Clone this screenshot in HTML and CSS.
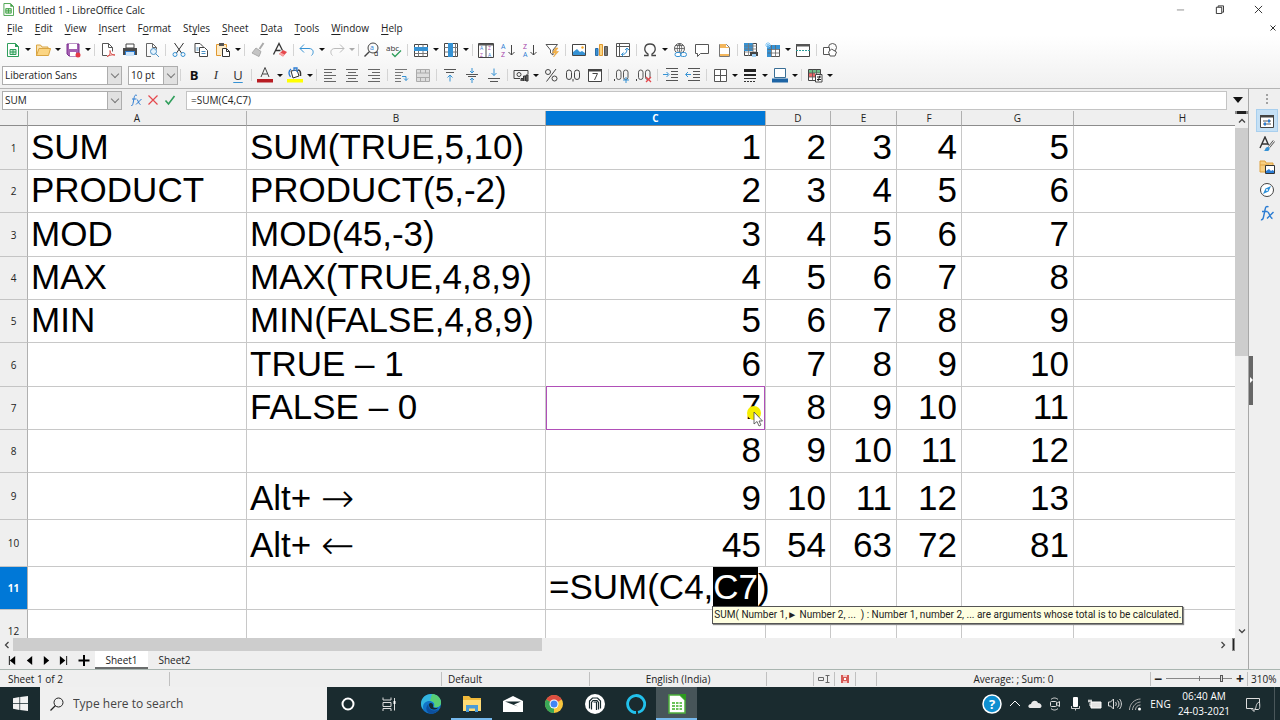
FILE: index.html
```html
<!DOCTYPE html>
<html lang="en">
<head>
    <meta charset="UTF-8">
    <title>Untitled 1 - LibreOffice Calc</title>
    <link rel="stylesheet" href="styles.css">
</head>
<body>
<header class="top">
    <div class="titlebar">
        <svg class="app_icon" viewBox="0 0 12 14"><path d="M1 .5h7l3.500 3.500v9.500h-10.500z" fill="#fff" stroke="#43a047"/><path d="M8 0v4h4z" fill="#43a047"/><path d="M3 6h6v5h-6zM3 8.500h6M6 6v5" fill="#b9e3ba" stroke="#43a047"/></svg>
        <h1>Untitled 1 - LibreOffice Calc</h1>
        <div class="win_btns">
            <button aria-label="Minimize"><svg viewBox="0 0 10 10"><path d="M1 5.500h8" stroke="#888"/></svg></button>
            <button aria-label="Restore"><svg viewBox="0 0 10 10"><path d="M1.500 2.500h6v7h-6zM3.500 2v-1h6v7h-1.500" stroke="#222"/></svg></button>
            <button aria-label="Close"><svg viewBox="0 0 10 10"><path d="M1 1l8 8M9 1l-8 8" stroke="#222"/></svg></button>
        </div>
    </div>
    <nav class="menubar">
        <button><u>F</u>ile</button>
        <button><u>E</u>dit</button>
        <button><u>V</u>iew</button>
        <button><u>I</u>nsert</button>
        <button>F<u>o</u>rmat</button>
        <button>St<u>y</u>les</button>
        <button><u>S</u>heet</button>
        <button><u>D</u>ata</button>
        <button><u>T</u>ools</button>
        <button><u>W</u>indow</button>
        <button><u>H</u>elp</button>
        <button class="doc_close" aria-label="Close document"><svg viewBox="0 0 6 6"><path d="M.5.5l5 5M5.500.5l-5 5" stroke="#333"/></svg></button>
    </nav>

    <!-- standard toolbar -->
    <div class="toolbar">
        <button class="tool" aria-label="New"><svg viewBox="0 0 16 16"><path d="M2.500 1.500h8l3 3v10h-11z" fill="#fff" stroke="#2f9e5b"/><path d="M10 1v4h4z" fill="#2f9e5b"/><path d="M5 7.500h6v5h-6zM5 10h6M8 7.500v5" fill="#c9ecd5" stroke="#2f9e5b"/></svg></button><button class="drop" aria-label="New options"></button>
        <button class="tool" aria-label="Open"><svg viewBox="0 0 16 16"><path d="M1.500 14v-11h4l1.500 2h6v3" fill="#fbe3b0" stroke="#d9a441"/><path d="M1.500 13.500l2.500-7h11.500l-2 7z" fill="#fbd583" stroke="#d9a441"/></svg></button><button class="drop" aria-label="Recent files"></button>
        <button class="tool" aria-label="Save"><svg viewBox="0 0 16 16"><path d="M2 2h12v12h-10l-2-2z" fill="#a561b3" stroke="#7b2d8e"/><path d="M4 2h8v5h-8z" fill="#fff"/><path d="M5 10h6v4h-6z" fill="#fff"/><circle cx="13" cy="13" r="2.500" fill="#e53946"/></svg></button><button class="drop" aria-label="Save options"></button>
        <i class="sep"></i>
        <button class="tool" aria-label="Export as PDF"><svg viewBox="0 0 16 16"><path d="M7 13.500h-4.500v-12h6l4 4v4" fill="#fff" stroke="#555"/><path d="M8.500 1.500v4h4" stroke="#555"/><path d="M7 14.500c3-1 3.500-4 3-6c0 3 2 4.500 5 4.500c-3-.5-5 0-8 1.500z" stroke="#d9534f"/></svg></button>
        <button class="tool" aria-label="Print"><svg viewBox="0 0 16 16"><path d="M4 2h8v4h-8z" fill="#fff" stroke="#444"/><path d="M1 6h14v7h-14z" fill="#4a4a4a"/><path d="M3 9h10v4h-10z" fill="#2b7cd3"/><path d="M4 10h8v4h-8z" fill="#cfe6fa"/></svg></button>
        <button class="tool" aria-label="Print preview"><svg viewBox="0 0 16 16"><path d="M7 14.500h-4.500v-13h6l4 4v2M8.500 1.500v4h4" stroke="#666"/><circle cx="9.500" cy="9.500" r="3" fill="#e3f2fd" stroke="#4a90c4"/><path d="M11.500 11.500l3.500 3.500" stroke="#4a90c4"/></svg></button>
        <i class="sep"></i>
        <button class="tool" aria-label="Cut"><svg viewBox="0 0 16 16"><path d="M3.500 1l7 10M12.500 1l-7 10" stroke="#333"/><circle cx="4" cy="12.500" r="2" stroke="#3692d4"/><circle cx="12" cy="12.500" r="2" stroke="#3692d4"/></svg></button>
        <button class="tool" aria-label="Copy"><svg viewBox="0 0 16 16"><path d="M2 1.500h5l3 3v6h-8z" fill="#fff" stroke="#444"/><path d="M6.500 5.500h5l3 3v6h-8z" fill="#fff" stroke="#444"/><path d="M8.500 9.500h4M8.500 11.500h4M3.500 6h2M3.500 8h2" stroke="#4a90c4"/></svg></button>
        <button class="tool" aria-label="Paste"><svg viewBox="0 0 16 16"><path d="M6 13.500h-4.500v-11h10v3" fill="#fdebc8" stroke="#e0982f"/><path d="M4 1h5v3h-5z" fill="#555"/><path d="M7.500 6.500h4l3 3v5h-7z" fill="#fff" stroke="#333"/><path d="M11.500 6.500v3h3" stroke="#333"/></svg></button><button class="drop" aria-label="Paste options"></button>
        <i class="sep"></i>
        <button class="tool" aria-label="Clone formatting" disabled><svg viewBox="0 0 16 16"><path d="M13.500 1l-4 6" stroke="#aaa" stroke-width="2"/><path d="M6 6l5 3.500-2 5-7-3.500z" fill="#c4c4c4" stroke="#aaa"/></svg></button>
        <button class="tool" aria-label="Clear formatting"><svg viewBox="0 0 16 16"><path d="M1.500 12.500l5.500-11 3.500 7M3.500 8.500h5" stroke="#333" stroke-width="1.300"/><path d="M7 12l4-4 4 2-4 4.500z" fill="#e5484d"/><path d="M7 12l1.500-1.500 4 2-1.500 2z" fill="#f8a5a5"/></svg></button>
        <i class="sep"></i>
        <button class="tool" aria-label="Undo"><svg viewBox="0 0 16 16"><path d="M5 2.500l-4 4 4 4M1 6.500h9c5 0 5 5 2.500 7" stroke="#3692d4"/></svg></button><button class="drop" aria-label="Undo list"></button>
        <button class="tool" aria-label="Redo" disabled><svg viewBox="0 0 16 16"><path d="M11 2.500l4 4-4 4M15 6.500h-9c-5 0-5 5-2.500 7" stroke="#bbb"/></svg></button><button class="drop dim" aria-label="Redo list"></button>
        <i class="sep"></i>
        <button class="tool" aria-label="Find and replace"><svg viewBox="0 0 16 16"><circle cx="9" cy="6" r="5" stroke="#444"/><path d="M5.500 9.500l-5 5" stroke="#444" stroke-width="1.500"/><text x="6" y="8" font-size="7" fill="#2b7cd3">a</text><text x="10" y="14" font-size="7" fill="#222">d</text></svg></button>
        <button class="tool" aria-label="Spelling"><svg viewBox="0 0 16 16"><text x="0" y="9" font-size="8" fill="#333">abc</text><path d="M6 11.500l3 3 6-6" stroke="#2f9e5b" stroke-width="1.300"/></svg></button>
        <i class="sep"></i>
        <button class="tool" aria-label="Row"><svg viewBox="0 0 16 16"><path d="M1.500 2.500h13v12h-13z" fill="#fff" stroke="#444"/><path d="M1 5h14v4h-14z" fill="#3692d4"/><path d="M1.500 11.500h13M5.500 9v5.500M10 9v5.500M5.500 2.500v2.500M10 2.500v2.500" stroke="#777"/></svg></button><button class="drop" aria-label="Row options"></button>
        <button class="tool" aria-label="Column"><svg viewBox="0 0 16 16"><path d="M1.500 1.500h13v13h-13z" fill="#fff" stroke="#444"/><path d="M5 1h5v14h-5z" fill="#3692d4"/><path d="M1.500 5.500h3.500M1.500 10h3.500M10 5.500h4.500M10 10h4.500M12.500 1.500v13" stroke="#777"/></svg></button><button class="drop" aria-label="Column options"></button>
        <i class="sep"></i>
        <button class="tool" aria-label="Sort"><svg viewBox="0 0 16 16"><path d="M.5 1.500h15v14h-15zM8 3v12" fill="#fff" stroke="#444"/><path d="M1 2h14v1.500h-14z" fill="#555"/><text x="2" y="8" font-size="5" fill="#2b7cd3">A</text><text x="2" y="15" font-size="5" fill="#a33fa8">Z</text><text x="10" y="8" font-size="5" fill="#a33fa8">Z</text><text x="10" y="15" font-size="5" fill="#2b7cd3">A</text></svg></button>
        <button class="tool" aria-label="Sort ascending"><svg viewBox="0 0 16 16"><text x="1" y="7" font-size="7" fill="#2b7cd3">A</text><text x="1" y="15" font-size="7" fill="#a33fa8">Z</text><path d="M11.500 3v10M8.500 10l3 3 3-3" stroke="#444"/></svg></button>
        <button class="tool" aria-label="Sort descending"><svg viewBox="0 0 16 16"><text x="1" y="7" font-size="7" fill="#a33fa8">Z</text><text x="1" y="15" font-size="7" fill="#2b7cd3">A</text><path d="M11.500 3v10M8.500 10l3 3 3-3" stroke="#444"/></svg></button>
        <button class="tool" aria-label="AutoFilter"><svg viewBox="0 0 16 16"><path d="M2 2.500h11.500l-4.500 5.500v5l-2.500-2v-3z" fill="#fff" stroke="#555"/><path d="M11.500 6l-3 5h3l-2 4 5-5.500h-3l2.500-3.500z" fill="#f7b54a" stroke="#e0982f" stroke-width=".5"/></svg></button>
        <i class="sep"></i>
        <button class="tool" aria-label="Insert image"><svg viewBox="0 0 16 16"><path d="M1.500 2.500h13v11h-13z" fill="#fff" stroke="#444"/><path d="M2 13v-3l4-3 3 3 2-1 3 2v2z" fill="#3692d4"/><circle cx="11.500" cy="5.500" r="1.200" fill="#f5a623"/></svg></button>
        <button class="tool" aria-label="Insert chart"><svg viewBox="0 0 16 16"><path d="M2.500 6.500h2.500v7h-2.500z" fill="#3692d4" stroke="#2b6ca8"/><path d="M6.500 2.500h3v11h-3z" fill="#fbd583" stroke="#e0982f"/><path d="M11.500 4.500h3v9h-3z" fill="#777" stroke="#555"/></svg></button>
        <button class="tool" aria-label="Insert pivot table"><svg viewBox="0 0 16 16"><path d="M1.500 1.500h13v13h-13zM1.500 4.500h13M4.500 1.500v13" fill="#fff" stroke="#555"/><path d="M6.500 12.500c4 0 5.500-2 5.500-6M10 8l2-2 2 2M8.500 10.500l-2 2 2 2" stroke="#3692d4"/></svg></button>
        <i class="sep"></i>
        <button class="tool" aria-label="Special character"><svg viewBox="0 0 16 16"><path d="M2 13.500h4v-1.500c-5-3-4-10 2-10s7 7 2 10v1.500h4" stroke="#444" stroke-width="1.300"/></svg></button><button class="drop" aria-label="More characters"></button>
        <button class="tool" aria-label="Insert hyperlink"><svg viewBox="0 0 16 16"><circle cx="7.500" cy="6.500" r="5" stroke="#555"/><path d="M2.500 6.500h10M7.500 1.500v10M4 3.500h7M7.500 1.500c-3 3-3 7 0 10M7.500 1.500c3 3 3 7 0 10" stroke="#555" stroke-width=".8"/><rect x="3" y="10.500" width="6" height="4" rx="2" fill="#fff" stroke="#3692d4"/><rect x="8.500" y="10.500" width="6" height="4" rx="2" stroke="#3692d4"/></svg></button>
        <button class="tool" aria-label="Insert comment"><svg viewBox="0 0 16 16"><path d="M1.500 2.500h13v9h-8l-3 3v-3h-2z" fill="#fff" stroke="#555"/></svg></button>
        <button class="tool" aria-label="Headers and footers"><svg viewBox="0 0 16 16"><path d="M3.500 2.500h7l3 3v9h-10z" fill="#fff" stroke="#777"/><path d="M4 2h6v3h3v1h-9zM4 12h9v2h-9z" fill="#f3b65c"/></svg></button>
        <i class="sep"></i>
        <button class="tool" aria-label="Define print area"><svg viewBox="0 0 16 16"><path d="M1.500 1.500h12v12h-12z" fill="#fff" stroke="#444"/><path d="M1 1h9v8h-9z" fill="#3692d4"/><path d="M1 4h13M1 7h13M1 10h13M5.500 1v13M10 1v13" stroke="#777" stroke-width=".8"/><path d="M7 10h8v4h-8z" fill="#444"/><path d="M9 12h4v3h-4z" fill="#9fd0f5"/></svg></button>
        <button class="tool" aria-label="Freeze rows and columns"><svg viewBox="0 0 16 16"><path d="M2.500 3.500h12v11h-12z" fill="#fff" stroke="#555"/><path d="M2 3h13v4h-13zM2 3h4v12h-4z" fill="#3692d4"/><path d="M2.500 7.500h12M2.500 11h12M6.500 3v12M10.500 3v12" stroke="#666" stroke-width=".8"/><path d="M3 0v6M0 3h6M1 1l4 4M5 1l-4 4" stroke="#8ccaf5"/></svg></button><button class="drop" aria-label="Freeze options"></button>
        <button class="tool" aria-label="Split window"><svg viewBox="0 0 16 16"><path d="M1.500 2.500h13v12h-13z" fill="#fff" stroke="#444"/><path d="M1 2h14v2.500h-14z" fill="#555"/><path d="M1 8.500h14" stroke="#2f9e9b" stroke-dasharray="2 1"/></svg></button>
        <i class="sep"></i>
        <button class="tool" aria-label="Show draw functions"><svg viewBox="0 0 16 16"><circle cx="10.500" cy="5.500" r="4" stroke="#555"/><path d="M1.500 5.500h6v7h-6z" fill="#fff" stroke="#555"/><path d="M9.500 7l5 3-1.500 4h-5l-1.500-4z" fill="#fff" stroke="#555"/></svg></button>
    </div>

    <!-- formatting toolbar -->
    <div class="toolbar">
        <div class="combo font_name"><select aria-label="Font name"><option>Liberation Sans</option></select><span class="combo_arrow"></span></div>
        <div class="combo font_size"><select aria-label="Font size"><option>10 pt</option></select><span class="combo_arrow"></span></div>
        <i class="sep"></i>
        <button class="tool letter bold">B</button>
        <button class="tool letter italic">I</button>
        <button class="tool letter underline">U</button>
        <i class="sep"></i>
        <button class="tool" aria-label="Font color"><svg viewBox="0 0 16 16"><path d="M4 10l4-9.500 4 9.500M5.500 7h5" stroke="#444"/><path d="M0 12h16v3.500h-16z" fill="#b81c22"/></svg></button><button class="drop" aria-label="Font colors"></button>
        <button class="tool" aria-label="Highlighting color"><svg viewBox="0 0 16 16"><path d="M4 4l6-1 2 6-6 2z" fill="#fff" stroke="#333"/><path d="M3.500 10c-2-3-2-6 .5-8M7 4v-3h3v4" stroke="#2b7cd3" stroke-width="1.300"/><path d="M11 3c2 0 3 2 2.500 6" stroke="#333" stroke-width="1.500"/><path d="M0 12h16v3.500h-16z" fill="#ffff00"/></svg></button><button class="drop" aria-label="Highlighting colors"></button>
        <i class="sep"></i>
        <button class="tool" aria-label="Align left"><svg viewBox="0 0 16 16"><path d="M2 2.500h12M2 5.500h8M2 8.500h12M2 11.500h8M2 14.500h12" stroke="#666"/></svg></button>
        <button class="tool" aria-label="Center horizontally"><svg viewBox="0 0 16 16"><path d="M2 2.500h12M4 5.500h8M2 8.500h12M4 11.500h8M2 14.500h12" stroke="#666"/></svg></button>
        <button class="tool" aria-label="Align right"><svg viewBox="0 0 16 16"><path d="M2 2.500h12M6 5.500h8M2 8.500h12M6 11.500h8M2 14.500h12" stroke="#666"/></svg></button>
        <i class="sep"></i>
        <button class="tool" aria-label="Wrap text"><svg viewBox="0 0 16 16"><path d="M2 2.500h12M2 5.500h8M2 8.500h6M2 11.500h6M2 14.500h6" stroke="#777"/><path d="M9 9.500h4v4M11 11.500l2 2 2-2" stroke="#3692d4"/></svg></button>
        <button class="tool" aria-label="Merge cells" disabled><svg viewBox="0 0 16 16"><path d="M1.500 2.500h13v12h-13zM1.500 6h13M1.500 10.500h13M5.500 2.500v3.500M10.500 2.500v3.500M5.500 10.500v4M10.500 10.500v4" fill="#ddd" stroke="#aaa"/></svg></button>
        <i class="sep"></i>
        <button class="tool" aria-label="Align top"><svg viewBox="0 0 16 16"><path d="M2 2.500h12M4 5.500h8" stroke="#555"/><path d="M8 14.500v-6M5.500 10.500l2.500-2.500 2.500 2.500" stroke="#3692d4"/></svg></button>
        <button class="tool" aria-label="Center vertically"><svg viewBox="0 0 16 16"><path d="M2 7.500h12M4 9.500h8" stroke="#555"/><path d="M8 1v5M6 4l2 2 2-2M8 16v-5M6 13l2-2 2 2" stroke="#3692d4"/></svg></button>
        <button class="tool" aria-label="Align bottom"><svg viewBox="0 0 16 16"><path d="M2 11.500h12M4 14.500h8" stroke="#555"/><path d="M8 1.500v7M5.500 6l2.500 2.500 2.500-2.500" stroke="#3692d4"/></svg></button>
        <i class="sep"></i>
        <button class="tool" aria-label="Format as currency"><svg viewBox="0 0 16 16"><path d="M7 11.500h-6v-8h14v4" stroke="#444"/><circle cx="6" cy="7.500" r="2" stroke="#444"/><path d="M8 14v-2.500h2v2.500M10.500 14v-5h2v5M13 14v-6h2v6z" fill="#777" stroke="#333"/></svg></button><button class="drop" aria-label="Currency options"></button>
        <button class="tool" aria-label="Format as percent"><svg viewBox="0 0 16 16"><circle cx="5" cy="5" r="2.500" stroke="#444"/><circle cx="11.500" cy="11.500" r="2.500" stroke="#444"/><path d="M13 2l-9.500 12.500" stroke="#444"/></svg></button>
        <button class="tool" aria-label="Format as number"><svg viewBox="0 0 16 16"><rect x="1.500" y="3" width="5" height="9.500" rx="2.500" stroke="#444"/><rect x="9.500" y="3" width="5" height="9.500" rx="2.500" stroke="#444"/><path d="M8 12v2.500" stroke="#444"/></svg></button>
        <button class="tool" aria-label="Format as date"><svg viewBox="0 0 16 16"><path d="M1.500 2.500h13v12h-13z" fill="#fff" stroke="#444"/><path d="M1 2h14v2.500h-14z" fill="#444"/><path d="M5.500 6.500h5l-3 6.500" stroke="#444"/></svg></button>
        <i class="sep"></i>
        <button class="tool" aria-label="Add decimal place"><svg viewBox="0 0 16 16"><path d="M.5 12v2" stroke="#444"/><rect x="2.500" y="3" width="4.500" height="9.500" rx="2.200" stroke="#555"/><rect x="9.500" y="3" width="4.500" height="9.500" rx="2.200" stroke="#555"/><path d="M9 13h6M12 10v6" stroke="#3692d4"/></svg></button>
        <button class="tool" aria-label="Delete decimal place"><svg viewBox="0 0 16 16"><path d="M.5 12v2" stroke="#444"/><rect x="2.500" y="3" width="4.500" height="9.500" rx="2.200" stroke="#555"/><rect x="9.500" y="3" width="4.500" height="9.500" rx="2.200" stroke="#555"/><path d="M10 10l5 5M15 10l-5 5" stroke="#e5484d" stroke-width="1.300"/></svg></button>
        <i class="sep"></i>
        <button class="tool" aria-label="Increase indent"><svg viewBox="0 0 16 16"><path d="M3 1.500h12M8 4.500h7M8 7.500h7M8 10.500h7M3 13.500h12" stroke="#555"/><path d="M0 7.500h5M3.500 5l2.500 2.500-2.500 2.500" stroke="#3692d4"/></svg></button>
        <button class="tool" aria-label="Decrease indent"><svg viewBox="0 0 16 16"><path d="M3 1.500h12M8 4.500h7M8 7.500h7M8 10.500h7M3 13.500h12" stroke="#555"/><path d="M1 7.500h5M3 5l-2.500 2.500 2.500 2.500" stroke="#3692d4"/></svg></button>
        <i class="sep"></i>
        <button class="tool" aria-label="Borders"><svg viewBox="0 0 16 16"><path d="M2.500 2.500h12v12h-12zM8.500 2.500v12M2.500 8.500h12" fill="#fff" stroke="#555"/></svg></button><button class="drop" aria-label="Border options"></button>
        <button class="tool" aria-label="Border style"><svg viewBox="0 0 16 16"><path d="M2 3.500h12" stroke="#222" stroke-width="3"/><path d="M2 8h12" stroke="#222" stroke-width="2"/><path d="M2 11.500h12" stroke="#333"/><path d="M2 14.500h12" stroke="#333" stroke-dasharray="2 1"/></svg></button><button class="drop" aria-label="Border styles"></button>
        <button class="tool" aria-label="Border color"><svg viewBox="0 0 16 16"><path d="M2.500 1.500h11v9h-11z" fill="#fff" stroke="#3a6f96"/><path d="M0 11.500h16v4h-16z" fill="#1d64a5"/></svg></button><button class="drop" aria-label="Border colors"></button>
        <i class="sep"></i>
        <button class="tool" aria-label="Conditional formatting"><svg viewBox="0 0 16 16"><path d="M1.500 2.500h12v11h-12z" fill="#fff" stroke="#444"/><path d="M2 3h11v3h-11z" fill="#6fbf8a"/><path d="M2 6h6v4h-6z" fill="#ee6a6a"/><path d="M1.500 6h12M1.500 10h12M5.500 2.500v11M9.500 2.500v11" stroke="#555" stroke-width=".8"/><path d="M8.500 7.500h6.500v7.500h-6.500z" fill="#fff" stroke="#444"/><path d="M10 10h4M10 12.500h4M13 8.500l-2 5.500" stroke="#222"/></svg></button><button class="drop" aria-label="Conditional options"></button>
    </div>
</header>

<main class="workspace">
    <section class="document">
        <div class="formula_bar">
            <div class="combo name_box"><input type="text" aria-label="Name box" value="SUM"><button class="combo_arrow" aria-label="Names"></button></div>
            <div class="formula_btns">
                <button aria-label="Function wizard"><svg viewBox="0 0 12 12"><path d="M7 1.500c-2-1-2.500 0-3 3l-1 5c-.5 2-1 2.500-2 2M2 5h4M6.500 5c1.500 0 2 5.500 4 5.500M11.500 5l-5.500 5.500" stroke="#2b7cd3"/></svg></button>
                <button aria-label="Cancel"><svg viewBox="0 0 12 12"><path d="M1.500 1.500l9 9M10.500 1.500l-9 9" stroke="#e5484d" stroke-width="1.200"/></svg></button>
                <button aria-label="Accept"><svg viewBox="0 0 12 12"><path d="M1.500 6.500l3 3.500 6-8" stroke="#2f9e5b" stroke-width="1.600"/></svg></button>
            </div>
            <input class="formula" type="text" aria-label="Formula" value="=SUM(C4,C7)">
            <button class="expand" aria-label="Expand formula bar"></button>
        </div>

        <div class="sheet_area">
            <div class="grid_view">
                <table class="grid">
                    <colgroup><col class="c_num"><col class="c_a"><col class="c_b"><col class="c_c"><col class="c_d"><col class="c_e"><col class="c_f"><col class="c_g"><col></colgroup>
                    <thead>
                        <tr><th></th><th>A</th><th>B</th><th class="current">C</th><th>D</th><th>E</th><th>F</th><th>G</th><th class="col_h">H</th></tr>
                    </thead>
                    <tbody>
                        <tr class="tall"><th>1</th><td>SUM</td><td>SUM(TRUE,5,10)</td><td class="num">1</td><td class="num">2</td><td class="num">3</td><td class="num">4</td><td class="num">5</td><td></td></tr>
                        <tr><th>2</th><td>PRODUCT</td><td>PRODUCT(5,-2)</td><td class="num">2</td><td class="num">3</td><td class="num">4</td><td class="num">5</td><td class="num">6</td><td></td></tr>
                        <tr class="tall"><th>3</th><td>MOD</td><td>MOD(45,-3)</td><td class="num">3</td><td class="num">4</td><td class="num">5</td><td class="num">6</td><td class="num">7</td><td></td></tr>
                        <tr><th>4</th><td>MAX</td><td>MAX(TRUE,4,8,9)</td><td class="num">4</td><td class="num">5</td><td class="num">6</td><td class="num">7</td><td class="num">8</td><td></td></tr>
                        <tr><th>5</th><td>MIN</td><td>MIN(FALSE,4,8,9)</td><td class="num">5</td><td class="num">6</td><td class="num">7</td><td class="num">8</td><td class="num">9</td><td></td></tr>
                        <tr class="tall"><th>6</th><td></td><td>TRUE – 1</td><td class="num">6</td><td class="num">7</td><td class="num">8</td><td class="num">9</td><td class="num">10</td><td></td></tr>
                        <tr><th>7</th><td></td><td>FALSE – 0</td><td class="num picked">7<span class="pointer"><svg viewBox="0 0 18 22"><circle cx="8" cy="8" r="7" fill="#f5ee00"/><path d="M8 7v12l3-2.500 2 4.500 2-1-2-4h3.500z" fill="#fff" stroke="#444" stroke-width=".8"/></svg></span></td><td class="num">8</td><td class="num">9</td><td class="num">10</td><td class="num">11</td><td></td></tr>
                        <tr><th>8</th><td></td><td></td><td class="num">8</td><td class="num">9</td><td class="num">10</td><td class="num">11</td><td class="num">12</td><td></td></tr>
                        <tr class="arrows"><th>9</th><td></td><td>Alt+ <span class="sym">→</span></td><td class="num">9</td><td class="num">10</td><td class="num">11</td><td class="num">12</td><td class="num">13</td><td></td></tr>
                        <tr class="arrows"><th>10</th><td></td><td>Alt+ <span class="sym">←</span></td><td class="num">45</td><td class="num">54</td><td class="num">63</td><td class="num">72</td><td class="num">81</td><td></td></tr>
                        <tr><th class="current">11</th><td></td><td></td><td class="editing"><div class="editor">=SUM(C4,<span class="sel">C7<span class="hint">SUM( Number 1,<b>►</b> Number 2, ...&nbsp; ) : Number 1, number 2, ... are arguments whose total is to be calculated.</span></span>)</div></td><td></td><td></td><td></td><td></td><td></td></tr>
                        <tr><th>12</th><td></td><td></td><td></td><td></td><td></td><td></td><td></td><td></td></tr>
                    </tbody>
                </table>
            </div>
            <div class="vscroll">
                <i class="split"></i>
                <button aria-label="Scroll up"><svg viewBox="0 0 8 8"><path d="M1 5.500l3-3 3 3" stroke="#444" stroke-width="1.300"/></svg></button>
                <div class="track"><i class="thumb"></i></div>
                <button aria-label="Scroll down"><svg viewBox="0 0 8 8"><path d="M1 2.500l3 3 3-3" stroke="#444" stroke-width="1.300"/></svg></button>
            </div>
        </div>

        <div class="hscroll">
            <button aria-label="Scroll left"><svg viewBox="0 0 8 8"><path d="M5.500 1l-3 3 3 3" stroke="#444" stroke-width="1.300"/></svg></button>
            <div class="track"><i class="thumb"></i></div>
            <button aria-label="Scroll right"><svg viewBox="0 0 8 8"><path d="M2.500 1l3 3-3 3" stroke="#444" stroke-width="1.300"/></svg></button>
            <i class="split"></i>
        </div>

        <div class="tabs">
            <button class="nav" aria-label="First sheet"><svg viewBox="0 0 10 10"><path d="M1.500 0v10" stroke="#000"/><path d="M8 0v10l-6-5z" fill="#000"/></svg></button>
            <button class="nav" aria-label="Previous sheet"><svg viewBox="0 0 10 10"><path d="M8 0v10l-6-5z" fill="#000"/></svg></button>
            <button class="nav" aria-label="Next sheet"><svg viewBox="0 0 10 10"><path d="M2 0v10l6-5z" fill="#000"/></svg></button>
            <button class="nav" aria-label="Last sheet"><svg viewBox="0 0 10 10"><path d="M1 0v10l6-5z" fill="#000"/><path d="M8.500 0v10" stroke="#000"/></svg></button>
            <button class="nav add" aria-label="Add sheet"><svg viewBox="0 0 12 12"><path d="M6 1v11M.5 6.500h11" stroke="#000" stroke-width="2"/></svg></button>
            <button class="tab on">Sheet1</button>
            <button class="tab">Sheet2</button>
        </div>
    </section>

    <aside class="sidebar">
        <button class="handle" aria-label="Hide sidebar"></button>
        <button class="deck" aria-label="Sidebar settings"><svg viewBox="0 0 16 16"><path d="M8 3v2M8 7v2M8 11v2" stroke="#555"/></svg></button>
        <button class="deck on" aria-label="Properties"><svg viewBox="0 0 16 16"><path d="M1.500 2.500h13v12h-13z" fill="#fff" stroke="#444"/><path d="M1 2h14v2.500h-14z" fill="#444"/><path d="M4 8h8M4 11h8" stroke="#555"/><path d="M10 6.500v3M6 9.500v3" stroke="#2b7cd3" stroke-width="2"/></svg></button>
        <button class="deck" aria-label="Styles"><svg viewBox="0 0 16 16"><path d="M1 12l5-11 3.500 8M3 8h5.500" stroke="#333" stroke-width="1.400"/><path d="M15 5l-5 6" stroke="#555" stroke-width="2.500"/><path d="M15 5l-5 6" stroke="#fff"/><path d="M4.500 15c2 0 1.500-4 4-4s3 2.500.5 4z" fill="#3692d4"/></svg></button>
        <button class="deck" aria-label="Gallery"><svg viewBox="0 0 16 16"><path d="M1 13v-11h5l1 2h7v9z" fill="#f7cf82" stroke="#dfa03c"/><path d="M1 6h9" stroke="#dfa03c"/><path d="M6.500 6.500h9v8h-9z" fill="#fff" stroke="#333"/><path d="M7 14v-2l3-2 2 2 1.500-1 1.500 1v2z" fill="#2b7cd3"/></svg></button>
        <button class="deck" aria-label="Navigator"><svg viewBox="0 0 16 16"><circle cx="8" cy="8" r="6.500" fill="#fff" stroke="#444"/><path d="M12 4l-2.500 5.500-5.500 2.500 2.500-5.500z" fill="#2b8fd8"/><circle cx="8" cy="8" r="1" fill="#fff"/></svg></button>
        <button class="deck" aria-label="Functions"><svg viewBox="0 0 16 16"><path d="M9.500 2c-2-1.500-3 0-3.500 3l-1.500 7c-.5 2.500-1.500 3-2.500 2.500M3 6.500h5.500M8.500 7c2 0 2.500 6.500 5 6.500M14.500 7l-6.500 6.500" stroke="#2b7cd3" stroke-width="1.400"/></svg></button>
    </aside>
</main>

<footer class="status">
    <span class="s_sheet">Sheet 1 of 2</span>
    <span class="s_find"></span>
    <span class="s_style">Default</span>
    <span class="s_lang">English (India)</span>
    <span class="s_gap"></span>
    <span class="s_icon"><svg viewBox="0 0 12 8"><path d="M.5 2.500h5v3h-5zM7.500.5h4M7.500 7.500h4M9.500.5v7" stroke="#666"/></svg></span>
    <span class="s_icon"><svg viewBox="0 0 12 8"><path d="M2 0h8v8h-8z" fill="#d65a56"/><path d="M4 0h4v2h-4zM4 6h4v2h-4z" fill="#f3c2c0"/><path d="M5 3l2 2M7 3l-2 2" stroke="#fff"/></svg></span>
    <span class="s_icon"></span>
    <span class="s_sum">Average: ; Sum: 0</span>
    <span class="s_zoom">
        <button aria-label="Zoom out">−</button>
        <input type="range" min="0" max="100" value="85" aria-label="Zoom">
        <button aria-label="Zoom in">+</button>
    </span>
    <span class="s_pct">310%</span>
</footer>

<footer class="taskbar">
    <button class="start" aria-label="Start"><svg viewBox="0 0 14 14"><path d="M0 2l6-1v5.700h-6zM6.700.9l7.300-.9v6.700h-7.300zM0 7.400h6v5.600l-6-1zM6.700 7.400h7.300v6.600l-7.300-.9z" fill="#f2f2f2"/></svg></button>
    <label class="search">
        <svg viewBox="0 0 14 14"><circle cx="8.500" cy="5.500" r="4.500" stroke="#222"/><path d="M5.500 8.500l-5 5" stroke="#222" stroke-width="1.200"/></svg>
        <input type="text" placeholder="Type here to search">
    </label>
    <div class="apps">
        <button aria-label="Cortana"><svg viewBox="0 0 20 20"><circle cx="10" cy="10" r="5.500" stroke="#fff" stroke-width="2"/></svg></button>
        <button aria-label="Task view"><svg viewBox="0 0 20 20"><path d="M4 3.500v2.500h8v-2.500M4 17v-2.500h8v2.500M4 8.500h8v4h-8zM15.500 4v12.500" stroke="#ddd"/><path d="M15.500 7v3" stroke="#fff" stroke-width="2"/></svg></button>
        <button class="first" aria-label="Microsoft Edge"><svg viewBox="0 0 20 20"><circle cx="10" cy="10" r="10" fill="#1173c7"/><path d="M0 9.500c.5-12 19-13 20-1 0 4-3.500 5.500-7 4.500 2-4-3-7-7-5.500-3 1-5 4-3.500 8-1.800-1.500-2.500-4-2.500-6z" fill="#32b5e0"/><path d="M11 0c6 .5 9 4.500 9 8.500 0 4-3.500 5.500-7 4.500 1.500-4-1-6-4-6z" fill="#58cf75"/><path d="M7.500 10c-1 5 4 8 10 5.500-2 3.500-5.500 4.500-8 4.500-4-1.500-6-6-2-10z" fill="#0c4f9e"/><path d="M8 10c1.500-2.500 5 0 4 2.500-.5 1.500 3 2 5 1-1 2-3 2-4.500 2-3 0-5-3-4.500-5.500z" fill="#172a2e"/></svg></button>
        <button class="open" aria-label="File Explorer"><svg viewBox="0 0 20 20"><path d="M1 2h6l2 2h10v13h-18z" fill="#f0b93a"/><path d="M1 6h18v11h-18z" fill="#ffdb76"/><path d="M4 18v-7h12v7h-3v-3.500h-6v3.500z" fill="#4a9bd8"/></svg></button>
        <button aria-label="Mail"><svg viewBox="0 0 20 20"><path d="M0 7l10-5 10 5v11h-20z" fill="#fff"/><path d="M2 7.500h16l-7 3 4 2z" fill="#172a2e"/></svg></button>
        <button aria-label="Chrome"><svg viewBox="0 0 20 20"><circle cx="10" cy="10" r="9" fill="#f8c63d"/><path d="M10 10l-7.800-4.500a9 9 0 0 1 15.600 0z" fill="#dc4e41"/><path d="M10 10v9a9 9 0 0 1-7.800-13.500z" fill="#3aa757"/><circle cx="10" cy="10" r="4.500" fill="#fff"/><circle cx="10" cy="10" r="3.500" fill="#4285f4"/></svg></button>
        <button aria-label="Launcher"><svg viewBox="0 0 20 20"><circle cx="10" cy="10" r="10" fill="#fff"/><path d="M4.500 14.500v-7.500l3-3h5l3 3v7.500M6.500 15.500v-7l1.500-2h4l1.500 2v7M8.500 8h3v8" stroke="#172a2e" stroke-width="1.200"/></svg></button>
        <button aria-label="Alexa"><svg viewBox="0 0 20 20"><path d="M10 18.500a8.500 8.500 0 1 1 2-.2" stroke="#22c1ec" stroke-width="2.800"/></svg></button>
        <button class="open on" aria-label="LibreOffice Calc"><svg viewBox="0 0 20 20"><path d="M2 1h11l5 5v13h-16z" fill="#fff" stroke="#4caf3b" stroke-width="1.500"/><path d="M12 0h7v7z" fill="#2d9a1f"/><path d="M5 8h10v8h-10z" fill="#6cc35c"/><path d="M5 10.500h10M5 13.500h10M8.500 8v8M12 8v8" stroke="#fff"/></svg></button>
    </div>
    <div class="tray">
        <button aria-label="Help" class="help"><svg viewBox="0 0 20 20"><circle cx="10" cy="10" r="9" fill="#0f8fd0" stroke="#fff" stroke-width="1.500"/><text x="7" y="15" font-size="13" font-weight="700" fill="#fff">?</text></svg></button>
        <button aria-label="Show hidden icons"><svg viewBox="0 0 14 14"><path d="M2 9l5-5 5 5" stroke="#fff"/></svg></button>
        <button aria-label="OneDrive"><svg viewBox="0 0 14 14"><path d="M3 11c-4 0-3-4 0-4 1-4 6-4 7-1 4 0 5 5 1 5z" fill="#e8e8e8"/></svg></button>
        <button aria-label="Meet now"><svg viewBox="0 0 14 14"><rect x="2.500" y="4.500" width="6" height="5" rx="1" stroke="#ddd"/><path d="M8.500 6.500l3-2v5l-3-2M3 2.500c2-2 5-2 7 0M3 11.500c2 2 5 2 7 0" stroke="#ddd"/></svg></button>
        <button aria-label="Microphone"><svg viewBox="0 0 14 14"><rect x="5" y="0" width="5" height="10" rx="1" fill="#fff"/><path d="M3.500 9v2.500h8v-2.500M7.500 11.500v2" stroke="#ccc"/></svg></button>
        <button aria-label="Battery"><svg viewBox="0 0 14 14"><path d="M3 5h10v6h-10z" fill="#e4e4e4" stroke="#fff"/><path d="M0 4h4M1 2.500v3M3 2.500v3M2 6v3h2" stroke="#fff"/></svg></button>
        <button aria-label="Volume"><svg viewBox="0 0 14 14"><path d="M.5 5h2l3-3v10l-3-3h-2zM7.500 5c1 1 1 3 0 4M9.500 3.500c2 2 2 5 0 7M11.500 2c2.500 3 2.500 7 0 10" stroke="#ddd"/></svg></button>
        <button aria-label="Network"><svg viewBox="0 0 14 14"><path d="M1.500 13c0-6 5-11 11-11M4.500 13c0-4 4-8 8-8M7.500 13c0-3 2-5 5-5" stroke="#aaa"/><circle cx="11.500" cy="12" r="1.500" fill="#fff"/></svg></button>
        <span class="lang">ENG</span>
        <div class="clock"><time>06:40 AM</time><time>24-03-2021</time></div>
        <button class="notify" aria-label="Notifications"><svg viewBox="0 0 16 16"><path d="M1.500 2.500h13v8M8 12.500h-6.500v-10M6 12.500l3 3v-3" stroke="#ddd"/><path d="M14.500 6c-4 1-3 6-4.500 7.500h3c2 0 2-3 1.500-7.500z" fill="#172a2e" stroke="#ddd"/></svg></button>
    </div>
</footer>
</body>
</html>
```

FILE: styles.css
```css
* {
    box-sizing: border-box;
}
body {
    margin: 0;
    height: 100vh;
    display: flex;
    flex-direction: column;
    overflow: hidden;
    background-color: #efefef;
    color: #222;
    font: 10px/14px "Open Sans", "Noto Sans", sans-serif;
}
button, input, select {
    margin: 0;
    padding: 0;
    border: 0;
    border-radius: 0;
    background: none;
    color: inherit;
    font: inherit;
}
button {
    display: flex;
    align-items: center;
    justify-content: center;
}
svg {
    display: block;
    fill: none;
}
svg text {
    font-family: "Open Sans", sans-serif;
}

/* title, menu, toolbars */
.top {
    background: linear-gradient(#fff 40%, #f0f0f0);
    border-bottom: 1px solid #b4b4b4;
}
.titlebar {
    display: flex;
    align-items: center;
    height: 19px;
    padding: 0 2px 0 3px;
}
.app_icon {
    width: 11px;
    height: 13px;
}
.titlebar h1 {
    margin: 0 0 0 4px;
    font-size: 10px;
    font-weight: 400;
}
.win_btns {
    display: flex;
    margin-left: auto;
}
.win_btns button {
    width: 39px;
    height: 19px;
}
.win_btns svg {
    width: 9px;
    height: 9px;
}
.menubar {
    display: flex;
    align-items: center;
    gap: 12px;
    height: 18px;
    padding: 0 4px 0 7px;
}
.menubar u {
    text-underline-offset: 2px;
}
.doc_close {
    margin-left: auto;
}
.doc_close svg {
    width: 6px;
    height: 6px;
}
.toolbar {
    display: flex;
    align-items: center;
    height: 25px;
    padding-left: 2px;
}
.toolbar + .toolbar {
    height: 26px;
}
.tool {
    width: 22px;
    height: 22px;
}
.tool svg {
    width: 16px;
    height: 16px;
}
.drop {
    width: 8px;
    height: 22px;
}
.drop::before, .expand::before {
    content: "";
    border: 3px solid transparent;
    border-top: 3px solid #111;
    border-bottom: 0;
}
.drop.dim::before {
    border-top-color: #aaa;
}
.sep {
    width: 1px;
    height: 12px;
    margin: 0 2px;
    background-color: #d4d4d4;
}
.letter {
    font-size: 13px;
    color: #333;
}
.bold {
    font-weight: 700;
    color: #111;
}
.italic {
    font-family: "Liberation Serif", serif;
    font-style: italic;
}
.underline {
    text-decoration: underline;
    text-decoration-color: #3692d4;
    text-underline-offset: 2px;
}
.combo {
    display: grid;
    grid-template-columns: 1fr 14px;
    height: 19px;
    border: 1px solid #adadad;
    background-color: #fff;
}
.combo select {
    grid-area: 1 / 1 / 2 / 3;
    appearance: none;
    padding-left: 2px;
}
.combo input {
    min-width: 0;
    padding-left: 2px;
}
.combo_arrow {
    display: flex;
    align-items: center;
    justify-content: center;
    grid-area: 1 / 2 / 2 / 3;
    border-left: 1px solid #adadad;
    background-color: #e1e1e1;
    pointer-events: none;
}
.combo_arrow::before {
    content: "";
    width: 5px;
    height: 5px;
    border: solid #777;
    border-width: 0 1px 1px 0;
    transform: translateY(-1px) rotate(45deg);
}
.font_name, .name_box {
    width: 120px;
}
.font_size {
    width: 50px;
    margin-left: 6px;
}

/* document area */
.workspace {
    display: flex;
    flex: 1;
    min-height: 0;
}
.document {
    display: flex;
    flex-direction: column;
    flex: 1;
    min-width: 0;
}
.formula_bar {
    display: flex;
    align-items: center;
    height: 22px;
    padding-left: 2px;
}
.formula_btns {
    display: flex;
    gap: 5px;
    margin: 0 10px 0 8px;
}
.formula_btns svg {
    width: 12px;
    height: 12px;
}
.formula {
    flex: 1;
    min-width: 0;
    height: 19px;
    padding-left: 4px;
    border: 1px solid #c4c4c4;
    background-color: #fff;
}
.expand {
    width: 21px;
    height: 19px;
}
.expand::before {
    border-width: 5px;
    border-top-width: 6px;
}
.sheet_area {
    display: flex;
    flex: 1;
    min-height: 0;
}
.grid_view {
    flex: 1;
    min-width: 0;
    overflow: hidden;
    background-color: #fff;
}
.grid {
    width: 100%;
    table-layout: fixed;
    border-collapse: separate;
    border-spacing: 0;
    font-family: "Liberation Sans", Arial, sans-serif;
}
.c_num {
    width: 28px;
}
.c_a {
    width: 219px;
}
.c_b {
    width: 299px;
}
.c_c {
    width: 220px;
}
.c_d, .c_f {
    width: 65px;
}
.c_e {
    width: 66px;
}
.c_g {
    width: 112px;
}
.grid th {
    padding: 0;
    border: solid #b0b0b0;
    border-width: 0 1px 0 0;
    background-color: #efefef;
    font: 10px/14px "Open Sans", sans-serif;
}
.grid thead th {
    height: 15px;
    border-bottom-width: 1px;
    border-bottom-color: #8c8c8c;
}
.grid tbody th {
    border-bottom: 1px solid #c4c4c4;
}
.grid th.col_h {
    padding-left: 56px;
    border-right: 0;
}
.grid th.current {
    background-color: #0078d7;
    color: #fff;
    font-weight: 700;
}
.grid tbody tr {
    height: 43px;
}
.grid tbody tr.tall {
    height: 44px;
}
.grid td {
    position: relative;
    padding: 0 4px 2px 3px;
    border: solid #c8c8c8;
    border-width: 0 1px 1px 0;
    color: #000;
    font-size: 35px;
    line-height: 38px;
    white-space: nowrap;
}
.grid td:last-child {
    border-right: 0;
}
.grid .num {
    text-align: right;
}
.grid tbody tr.arrows {
    height: 47px;
}
.grid tr.arrows td {
    padding-top: 5px;
}
.sym {
    font-family: "DejaVu Sans Light", "DejaVu Sans", sans-serif;
    font-size: 40px;
    font-weight: 200;
    line-height: 1px;
    vertical-align: -2px;
}
.picked::before {
    content: "";
    position: absolute;
    inset: -1px 0;
    border: 1px solid #b04fb8;
}
.pointer {
    position: absolute;
    right: 1px;
    bottom: 2px;
}
.pointer svg {
    width: 18px;
    height: 22px;
}
.grid .editing {
    z-index: 1;
    padding-bottom: 0;
    vertical-align: top;
}
.editor {
    width: max-content;
    background-color: #fff;
    line-height: 40px;
}
.sel {
    position: relative;
    display: inline-block;
    background-color: #000;
    color: #fff;
}
.hint {
    position: absolute;
    top: 39px;
    left: -1px;
    padding: 0 1px;
    border: 1px solid #555;
    background-color: #ffffe1;
    box-shadow: 1px 1px 1px #888;
    color: #222;
    font: 10px/16px Roboto, "Open Sans", sans-serif;
}

/* scroll bars */
.vscroll {
    display: flex;
    flex-direction: column;
    width: 13px;
}
.vscroll .split {
    height: 3px;
    border: solid #8a8a8a;
    border-width: 0 2px;
    background-color: #222;
}
.vscroll button {
    height: 14px;
}
.vscroll svg, .hscroll svg {
    width: 8px;
    height: 8px;
}
.track {
    flex: 1;
}
.thumb {
    display: block;
    background-color: #cdcdcd;
}
.vscroll .thumb {
    height: 46%;
}
.hscroll {
    display: flex;
    height: 13px;
    padding-right: 13px;
}
.hscroll button {
    width: 13px;
}
.hscroll .thumb {
    width: 44%;
    height: 13px;
}
.hscroll .split {
    width: 3px;
    margin-left: 3px;
    border: 1px solid #8a8a8a;
    background-color: #222;
}
.tabs {
    display: flex;
    height: 18px;
    padding-left: 4px;
}
.nav {
    width: 17px;
}
.nav svg {
    width: 9px;
    height: 9px;
}
.add {
    width: 23px;
}
.add svg {
    width: 12px;
    height: 12px;
}
.tab {
    width: 53px;
    padding-top: 2px;
    border-bottom: 2px solid transparent;
}
.tab.on {
    border-color: #6a6d6d;
    background-color: #fff;
}

/* sidebar */
.sidebar {
    position: relative;
    display: flex;
    flex-direction: column;
    align-items: flex-end;
    width: 32px;
    padding-right: 2px;
    border-left: 1px solid #a8a8a8;
}
.deck {
    width: 22px;
    height: 23px;
}
.deck:nth-child(2) {
    height: 20px;
}
.deck.on {
    border: 1px solid #a8cfee;
    background-color: #c5e0f5;
}
.deck svg {
    width: 16px;
    height: 16px;
}
.handle {
    position: absolute;
    top: 46%;
    left: 0;
    width: 4px;
    height: 49px;
    background-color: #666;
}
.handle::before {
    content: "";
    border: 3px solid transparent;
    border-left-color: #fff;
    border-right: 0;
}

/* status bar */
.status {
    display: flex;
    align-items: center;
    height: 18px;
    border-top: 1px solid #a9b5b0;
}
.status span {
    display: flex;
    align-items: center;
    height: 14px;
    border-right: 1px solid #c0c0c0;
}
.status .s_sheet {
    width: 170px;
    padding-left: 8px;
}
.s_find {
    width: 272px;
}
.status .s_style {
    width: 148px;
    padding-left: 6px;
}
.status .s_lang {
    width: 177px;
    justify-content: center;
}
.s_gap {
    width: 47px;
}
.status .s_icon {
    width: 21px;
    justify-content: center;
}
.s_icon svg {
    width: 12px;
    height: 8px;
}
.status .s_sum {
    flex: 1;
    justify-content: center;
}
.status .s_zoom {
    width: 97px;
    justify-content: center;
    gap: 3px;
}
.s_zoom button {
    width: 10px;
    font-size: 14px;
    font-weight: 700;
}
.s_zoom input {
    appearance: none;
    width: 66px;
    height: 10px;
    background: linear-gradient(#777, #777) center / 1px 5px no-repeat, linear-gradient(#888, #888) center / 100% 1px no-repeat;
}
.s_zoom input::-webkit-slider-thumb {
    appearance: none;
    width: 3px;
    height: 7px;
    border: 1px solid #555;
    background-color: #ddd;
}
.status .s_pct {
    width: 32px;
    padding-left: 3px;
    border-right: 0;
}

/* windows taskbar */
.taskbar {
    display: flex;
    height: 33px;
    background-color: #1a2b2f;
    color: #fff;
}
.start {
    width: 40px;
}
.start svg {
    width: 15px;
    height: 15px;
}
.search {
    display: flex;
    align-items: center;
    width: 287px;
    padding-left: 10px;
    gap: 9px;
    background-color: #f0f0f0;
}
.search svg {
    width: 14px;
    height: 14px;
}
.search input {
    flex: 1;
    font-size: 12px;
    color: #333;
}
.search input::placeholder {
    color: #444;
}
.apps {
    display: flex;
}
.apps button {
    width: 41px;
    border: solid transparent;
    border-width: 2px 0;
}
.apps .first {
    margin-left: 1px;
}
.apps svg {
    width: 20px;
    height: 20px;
}
.apps .open {
    border-bottom-color: #76b9ed;
}
.apps .on {
    border-top-color: #475559;
    background-color: #475559;
}
.tray {
    display: flex;
    align-items: center;
    margin-left: auto;
    padding-right: 5px;
}
.tray button {
    width: 20px;
    height: 33px;
}
.tray svg {
    width: 14px;
    height: 14px;
}
.tray .help {
    width: 26px;
}
.tray .help svg {
    width: 20px;
    height: 20px;
}
.lang {
    width: 31px;
    text-align: center;
}
.clock {
    display: flex;
    flex-direction: column;
    width: 56px;
    text-align: center;
    line-height: 15px;
    white-space: nowrap;
}
.tray .notify {
    width: 43px;
    border-right: 1px solid #4a575a;
}
.notify svg {
    width: 16px;
    height: 16px;
}
```
